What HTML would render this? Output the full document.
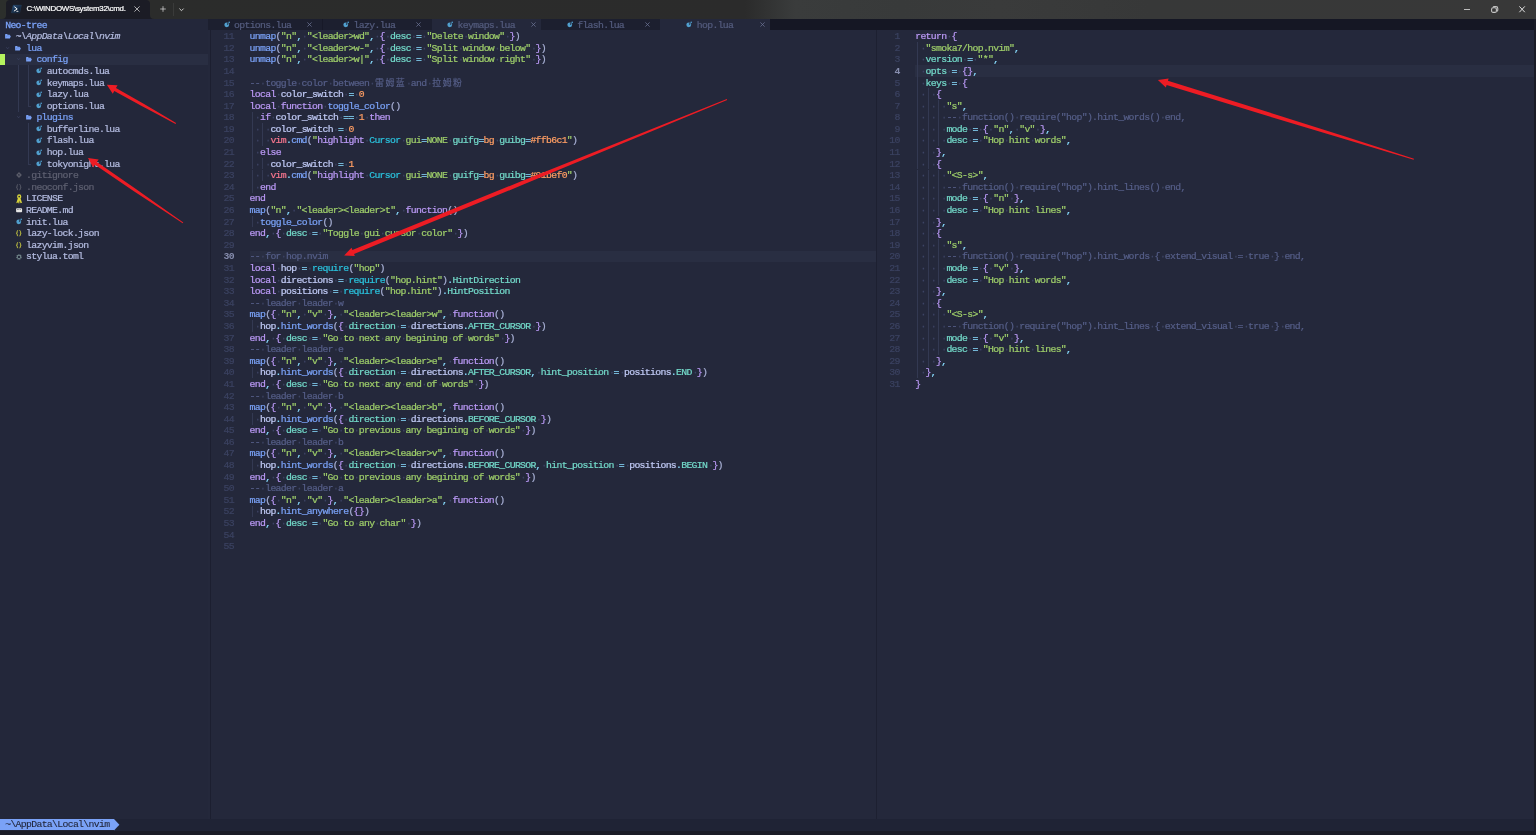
<!DOCTYPE html>
<html><head><meta charset="utf-8"><title>nvim</title><style>
html,body{margin:0;padding:0;background:#1a1b26;overflow:hidden}
body{width:1536px;height:835px;position:relative;font-family:"Liberation Mono",monospace}
#tb{position:absolute;left:0;top:0;width:1536px;height:19.0px;background:linear-gradient(90deg,#2c2f2c 0,#2b2c2b 150px,#2b2b2b 745px,#313232 765px,#3a3c3c 795px,#383a3a 900px,#3a3b3b 1000px,#373838 1150px,#383838 1536px)}
#tab{position:absolute;left:6px;top:0;width:144px;height:19.0px;background:#1b1c25;border-radius:4px 4px 0 0}
.tc{position:absolute;top:15.0px;width:4px;height:4px;background:#1b1c25}
.tc:after{content:"";position:absolute;left:0;top:0;width:4px;height:4px;background:#2c2f2c}
.tc.l{left:2px}.tc.l:after{border-radius:0 0 4px 0}
.tc.r{left:150px}.tc.r:after{border-radius:0 0 0 4px;background:#2b2c2b}
#tt{position:absolute;left:26.6px;top:4.4px;font:7.9px "Liberation Sans",sans-serif;letter-spacing:-0.26px;color:#fff;white-space:pre;line-height:9px;-webkit-text-stroke:0.2px}
#term{position:absolute;left:0;top:18.8px;width:1534px;height:811.44px;background:#24283b}
.bx{position:absolute}
.ic{position:absolute;overflow:visible}
.t{position:absolute;margin-top:0.77px;-webkit-text-stroke:0.22px;white-space:pre;font-size:9.8px;line-height:11.592px;height:11.592px;letter-spacing:-0.6697px;color:#c0caf5}
.g{position:absolute;width:1px;height:11.592px;background:#333952}
.sg{position:absolute;width:1px;background:#333952}
.sgh{position:absolute;height:1px;background:#333952}
.dot{color:#3d4464}
.cjk{font-family:"Liberation Mono","Noto Sans CJK SC",sans-serif;font-size:8.9px;letter-spacing:1.5px;padding-left:0.7px;margin-top:1.87px;-webkit-text-stroke:0.1px}
.fg{color:#c0caf5}.fgd{color:#a9b1d6}.com{color:#565f89;-webkit-text-stroke:0.2px}.blue{color:#7aa2f7}.b1{color:#2ac3de}.b5{color:#89ddff}
.mag{color:#bb9af7}.org{color:#ff9e64}.grn{color:#9ece6a}.g1{color:#73daca}.red{color:#f7768e}
.ln{color:#3b4261}.cur{color:#868dae;font-weight:bold;-webkit-text-stroke:0}
.b{-webkit-text-stroke:0.32px}
.fn{color:#b4bce0}.dim{color:#5e6071}
.root{font-style:italic;color:#b4bce0}
.tabn{color:#545c7e}
.sl{color:#1f2335;-webkit-text-stroke:0.1px}
#arr{position:absolute;left:0;top:0}
#all{position:absolute;left:0;top:0;width:1536px;height:835px;will-change:transform}
</style></head><body><div id="all">
<div id="tb"></div>
<div id="tab"></div><i class="tc l"></i><i class="tc r"></i>
<svg class="ic" style="left:10.5px;top:5px" width="11" height="8" viewBox="0 0 11 8"><defs><linearGradient id="pg" x1="0" y1="0" x2="1" y2="1"><stop offset="0" stop-color="#2f5a8a"/><stop offset="0.6" stop-color="#12263f"/><stop offset="1" stop-color="#0a1526"/></linearGradient></defs><path d="M2.2 0.2 H10.4 L8.6 7.8 H0.4 Z" fill="url(#pg)" stroke="#31577f" stroke-width="0.3"/><path d="M3.4 1.8 L6.2 3.9 L2.9 6.2" fill="none" stroke="#fff" stroke-width="1"/><path d="M5.4 6.3 H7.4" stroke="#fff" stroke-width="0.9"/></svg>
<span id="tt">C:\WINDOWS\system32\cmd.</span>
<svg class="ic" style="left:134px;top:6.3px" width="6" height="6" viewBox="0 0 6 6"><path d="M0.4 0.4 L5.6 5.6 M5.6 0.4 L0.4 5.6" stroke="#e8e8e8" stroke-width="0.7" fill="none"/></svg>
<svg class="ic" style="left:159.8px;top:6px" width="6" height="6" viewBox="0 0 6 6"><path d="M3 0.2 V5.8 M0.2 3 H5.8" stroke="#e0e0e0" stroke-width="0.7" fill="none"/></svg>
<i style="position:absolute;left:172.6px;top:2.5px;width:1px;height:13px;background:#3a3b3a"></i>
<svg class="ic" style="left:178.8px;top:8px" width="5" height="4" viewBox="0 0 5 4"><path d="M0.4 0.6 L2.5 2.7 L4.6 0.6" stroke="#dcdcdc" stroke-width="0.9" fill="none"/></svg>
<i style="position:absolute;left:1464px;top:8.7px;width:6.2px;height:1.1px;background:#bdbdbd"></i>
<svg class="ic" style="left:1490.9px;top:5.9px" width="7.4" height="7" viewBox="0 0 7.4 7"><rect x="0.6" y="1.7" width="4.8" height="4.7" rx="1.5" fill="none" stroke="#c4c4c4" stroke-width="1.1"/><path d="M2 1.5 Q2.2 0.6 3.4 0.6 H5 Q6.8 0.6 6.8 2.4 V3.9 Q6.8 5 5.8 5.3" fill="none" stroke="#c4c4c4" stroke-width="1.1"/></svg>
<svg class="ic" style="left:1518.9px;top:6.1px" width="6.2" height="6.6" viewBox="0 0 6.2 6.6"><path d="M0.4 0.4 L5.8 6.2 M5.8 0.4 L0.4 6.2" stroke="#ececec" stroke-width="0.95" fill="none"/></svg>
<div id="term"></div>
<div class="bx" style="left:0;top:18.8px;width:208px;height:799.85px;background:#23273a"></div>
<div class="bx" style="left:209.8px;top:30.39px;width:1.6px;height:788.26px;background:#1c1f30"></div>
<div class="bx" style="left:876px;top:30.39px;width:1px;height:788.26px;background:#1d2031"></div>
<div class="bx" style="left:208px;top:18.8px;width:1326px;height:11.592px;background:#151724"></div>
<div class="bx" style="left:208.0px;top:18.8px;width:114.4px;height:11.592px;background:#1c1f2f"></div>
<svg class="ic" style="left:223.5px;top:21.1px" width="7" height="7" viewBox="0 0 7 7"><circle cx="2.75" cy="3.85" r="2.4" fill="#51a0cf"/><circle cx="3.65" cy="2.95" r="0.75" fill="#1c1f2f"/><circle cx="5.2" cy="1.35" r="0.8" fill="#51a0cf"/></svg>
<span class="t tabn" style="left:234.0px;top:18.8px">options.lua</span>
<svg class="ic" style="left:307.2px;top:22.2px" width="5" height="5" viewBox="0 0 5 5"><path d="M0.4 0.4 L4.6 4.6 M4.6 0.4 L0.4 4.6" fill="none" stroke="#6b7394" stroke-width="0.75"/></svg>
<div class="bx" style="left:322.4px;top:18.8px;width:109.2px;height:11.592px;background:#1c1f2f"></div>
<svg class="ic" style="left:343.1px;top:21.1px" width="7" height="7" viewBox="0 0 7 7"><circle cx="2.75" cy="3.85" r="2.4" fill="#51a0cf"/><circle cx="3.65" cy="2.95" r="0.75" fill="#1c1f2f"/><circle cx="5.2" cy="1.35" r="0.8" fill="#51a0cf"/></svg>
<span class="t tabn" style="left:353.6px;top:18.8px">lazy.lua</span>
<svg class="ic" style="left:416.4px;top:22.2px" width="5" height="5" viewBox="0 0 5 5"><path d="M0.4 0.4 L4.6 4.6 M4.6 0.4 L0.4 4.6" fill="none" stroke="#6b7394" stroke-width="0.75"/></svg>
<div class="bx" style="left:431.6px;top:18.8px;width:109.2px;height:11.592px;background:#24283b"></div>
<svg class="ic" style="left:447.1px;top:21.1px" width="7" height="7" viewBox="0 0 7 7"><circle cx="2.75" cy="3.85" r="2.4" fill="#51a0cf"/><circle cx="3.65" cy="2.95" r="0.75" fill="#24283b"/><circle cx="5.2" cy="1.35" r="0.8" fill="#51a0cf"/></svg>
<span class="t tabn" style="left:457.6px;top:18.8px">keymaps.lua</span>
<svg class="ic" style="left:530.8px;top:22.2px" width="5" height="5" viewBox="0 0 5 5"><path d="M0.4 0.4 L4.6 4.6 M4.6 0.4 L0.4 4.6" fill="none" stroke="#6b7394" stroke-width="0.75"/></svg>
<div class="bx" style="left:540.8px;top:18.8px;width:119.6px;height:11.592px;background:#1c1f2f"></div>
<svg class="ic" style="left:566.7px;top:21.1px" width="7" height="7" viewBox="0 0 7 7"><circle cx="2.75" cy="3.85" r="2.4" fill="#51a0cf"/><circle cx="3.65" cy="2.95" r="0.75" fill="#1c1f2f"/><circle cx="5.2" cy="1.35" r="0.8" fill="#51a0cf"/></svg>
<span class="t tabn" style="left:577.2px;top:18.8px">flash.lua</span>
<svg class="ic" style="left:645.2px;top:22.2px" width="5" height="5" viewBox="0 0 5 5"><path d="M0.4 0.4 L4.6 4.6 M4.6 0.4 L0.4 4.6" fill="none" stroke="#6b7394" stroke-width="0.75"/></svg>
<div class="bx" style="left:660.4px;top:18.8px;width:109.2px;height:11.592px;background:#24283b"></div>
<svg class="ic" style="left:686.3px;top:21.1px" width="7" height="7" viewBox="0 0 7 7"><circle cx="2.75" cy="3.85" r="2.4" fill="#51a0cf"/><circle cx="3.65" cy="2.95" r="0.75" fill="#24283b"/><circle cx="5.2" cy="1.35" r="0.8" fill="#51a0cf"/></svg>
<span class="t tabn" style="left:696.8px;top:18.8px">hop.lua</span>
<svg class="ic" style="left:759.6px;top:22.2px" width="5" height="5" viewBox="0 0 5 5"><path d="M0.4 0.4 L4.6 4.6 M4.6 0.4 L0.4 4.6" fill="none" stroke="#6b7394" stroke-width="0.75"/></svg>
<div class="bx" style="left:321.9px;top:18.8px;width:1px;height:11.592px;background:#171928"></div>
<div class="bx" style="left:0;top:818.65px;width:1534px;height:11.892000000000001px;background:#1f2335"></div>
<div class="bx" style="left:0;top:818.65px;width:114.4px;height:11.592px;background:#7aa2f7"></div>
<svg class="ic" style="left:114.2px;top:818.65px" width="6" height="11.592" viewBox="0 0 6 11.592"><path d="M0 0 L5.4 5.796 L0 11.592 Z" fill="#7aa2f7"/></svg>
<span class="t sl" style="left:5.2px;top:818.65px">~\AppData\Local\nvim</span>
<div class="bx" style="left:0;top:53.58px;width:208px;height:11.592px;background:#292e42"></div>
<div class="bx" style="left:0;top:53.58px;width:5.2px;height:11.592px;background:#b5f45e"></div>
<span class="t blue b" style="left:5.2px;top:18.8px">Neo-tree</span>
<svg class="ic" style="left:4.8px;top:34.09px" width="6" height="4.8" viewBox="0 0 6 4.8"><path d="M0.1 0.5 Q0.1 0.1 0.5 0.1 H2.1 L2.7 0.7 H4.6 Q5 0.7 5 1.1 V1.7 H5.6 Q6 1.7 5.85 2.1 L5 4.2 Q4.8 4.6 4.4 4.6 H0.5 Q0.1 4.6 0.1 4.2 Z" fill="#7aa2f7"/><path d="M0.7 3.6 L1.6 1.9 H4.9" fill="none" stroke="#4f6cb0" stroke-width="0.35"/></svg>
<span class="t root" style="left:15.6px;top:30.39px">~\AppData\Local\nvim</span>
<svg class="ic" style="left:6.2px;top:46.78px" width="3.2" height="2.2" viewBox="0 0 3.2 2.2"><path d="M0.3 0.3 L1.6 1.8 L2.9 0.3" fill="none" stroke="#3b4261" stroke-width="0.8"/></svg>
<svg class="ic" style="left:15.2px;top:45.68px" width="6" height="4.8" viewBox="0 0 6 4.8"><path d="M0.1 0.5 Q0.1 0.1 0.5 0.1 H2.1 L2.7 0.7 H4.6 Q5 0.7 5 1.1 V1.7 H5.6 Q6 1.7 5.85 2.1 L5 4.2 Q4.8 4.6 4.4 4.6 H0.5 Q0.1 4.6 0.1 4.2 Z" fill="#7aa2f7"/><path d="M0.7 3.6 L1.6 1.9 H4.9" fill="none" stroke="#4f6cb0" stroke-width="0.35"/></svg>
<span class="t blue" style="left:26.0px;top:41.98px">lua</span>
<svg class="ic" style="left:16.6px;top:58.38px" width="3.2" height="2.2" viewBox="0 0 3.2 2.2"><path d="M0.3 0.3 L1.6 1.8 L2.9 0.3" fill="none" stroke="#3b4261" stroke-width="0.8"/></svg>
<svg class="ic" style="left:25.6px;top:57.28px" width="6" height="4.8" viewBox="0 0 6 4.8"><path d="M0.1 0.5 Q0.1 0.1 0.5 0.1 H2.1 L2.7 0.7 H4.6 Q5 0.7 5 1.1 V1.7 H5.6 Q6 1.7 5.85 2.1 L5 4.2 Q4.8 4.6 4.4 4.6 H0.5 Q0.1 4.6 0.1 4.2 Z" fill="#7aa2f7"/><path d="M0.7 3.6 L1.6 1.9 H4.9" fill="none" stroke="#4f6cb0" stroke-width="0.35"/></svg>
<span class="t blue" style="left:36.4px;top:53.58px">config</span>
<svg class="ic" style="left:36.3px;top:67.47px" width="7" height="7" viewBox="0 0 7 7"><circle cx="2.75" cy="3.85" r="2.4" fill="#51a0cf"/><circle cx="3.65" cy="2.95" r="0.75" fill="#1f2335"/><circle cx="5.2" cy="1.35" r="0.8" fill="#51a0cf"/></svg>
<span class="t fn" style="left:46.8px;top:65.17px">autocmds.lua</span>
<svg class="ic" style="left:36.3px;top:79.06px" width="7" height="7" viewBox="0 0 7 7"><circle cx="2.75" cy="3.85" r="2.4" fill="#51a0cf"/><circle cx="3.65" cy="2.95" r="0.75" fill="#1f2335"/><circle cx="5.2" cy="1.35" r="0.8" fill="#51a0cf"/></svg>
<span class="t fn" style="left:46.8px;top:76.76px">keymaps.lua</span>
<svg class="ic" style="left:36.3px;top:90.65px" width="7" height="7" viewBox="0 0 7 7"><circle cx="2.75" cy="3.85" r="2.4" fill="#51a0cf"/><circle cx="3.65" cy="2.95" r="0.75" fill="#1f2335"/><circle cx="5.2" cy="1.35" r="0.8" fill="#51a0cf"/></svg>
<span class="t fn" style="left:46.8px;top:88.35px">lazy.lua</span>
<svg class="ic" style="left:36.3px;top:102.24px" width="7" height="7" viewBox="0 0 7 7"><circle cx="2.75" cy="3.85" r="2.4" fill="#51a0cf"/><circle cx="3.65" cy="2.95" r="0.75" fill="#1f2335"/><circle cx="5.2" cy="1.35" r="0.8" fill="#51a0cf"/></svg>
<span class="t fn" style="left:46.8px;top:99.94px">options.lua</span>
<svg class="ic" style="left:16.6px;top:116.34px" width="3.2" height="2.2" viewBox="0 0 3.2 2.2"><path d="M0.3 0.3 L1.6 1.8 L2.9 0.3" fill="none" stroke="#3b4261" stroke-width="0.8"/></svg>
<svg class="ic" style="left:25.6px;top:115.24px" width="6" height="4.8" viewBox="0 0 6 4.8"><path d="M0.1 0.5 Q0.1 0.1 0.5 0.1 H2.1 L2.7 0.7 H4.6 Q5 0.7 5 1.1 V1.7 H5.6 Q6 1.7 5.85 2.1 L5 4.2 Q4.8 4.6 4.4 4.6 H0.5 Q0.1 4.6 0.1 4.2 Z" fill="#7aa2f7"/><path d="M0.7 3.6 L1.6 1.9 H4.9" fill="none" stroke="#4f6cb0" stroke-width="0.35"/></svg>
<span class="t blue" style="left:36.4px;top:111.54px">plugins</span>
<svg class="ic" style="left:36.3px;top:125.43px" width="7" height="7" viewBox="0 0 7 7"><circle cx="2.75" cy="3.85" r="2.4" fill="#51a0cf"/><circle cx="3.65" cy="2.95" r="0.75" fill="#1f2335"/><circle cx="5.2" cy="1.35" r="0.8" fill="#51a0cf"/></svg>
<span class="t fn" style="left:46.8px;top:123.13px">bufferline.lua</span>
<svg class="ic" style="left:36.3px;top:137.02px" width="7" height="7" viewBox="0 0 7 7"><circle cx="2.75" cy="3.85" r="2.4" fill="#51a0cf"/><circle cx="3.65" cy="2.95" r="0.75" fill="#1f2335"/><circle cx="5.2" cy="1.35" r="0.8" fill="#51a0cf"/></svg>
<span class="t fn" style="left:46.8px;top:134.72px">flash.lua</span>
<svg class="ic" style="left:36.3px;top:148.61px" width="7" height="7" viewBox="0 0 7 7"><circle cx="2.75" cy="3.85" r="2.4" fill="#51a0cf"/><circle cx="3.65" cy="2.95" r="0.75" fill="#1f2335"/><circle cx="5.2" cy="1.35" r="0.8" fill="#51a0cf"/></svg>
<span class="t fn" style="left:46.8px;top:146.31px">hop.lua</span>
<svg class="ic" style="left:36.3px;top:160.2px" width="7" height="7" viewBox="0 0 7 7"><circle cx="2.75" cy="3.85" r="2.4" fill="#51a0cf"/><circle cx="3.65" cy="2.95" r="0.75" fill="#1f2335"/><circle cx="5.2" cy="1.35" r="0.8" fill="#51a0cf"/></svg>
<span class="t fn" style="left:46.8px;top:157.9px">tokyonight.lua</span>
<i class="sg" style="left:17.7px;top:65.17px;height:46.37px"></i>
<i class="sg" style="left:28.1px;top:65.17px;height:40.57px"></i>
<i class="sgh" style="left:28.1px;top:105.74px;width:3.4px"></i>
<i class="sg" style="left:28.1px;top:123.13px;height:40.57px"></i>
<i class="sgh" style="left:28.1px;top:163.7px;width:3.4px"></i>
<svg class="ic" style="left:15.8px;top:172.3px" width="6" height="6" viewBox="0 0 6 6"><path d="M3 0.1 L5.9 3 L3 5.9 L0.1 3 Z" fill="#5a5c69"/><circle cx="3" cy="3" r="0.7" fill="#23273a"/><path d="M1.6 1.6 L3 3" stroke="#23273a" stroke-width="0.4"/></svg>
<span class="t dim" style="left:26.0px;top:169.5px">.gitignore</span>
<svg class="ic" style="left:15.8px;top:183.79px" width="5.6" height="6.4" viewBox="0 0 5.6 6.4"><path d="M2.1 0.5 Q1.2 0.5 1.2 1.4 V2.3 Q1.2 3.1 0.4 3.2 Q1.2 3.3 1.2 4.1 V5 Q1.2 5.9 2.1 5.9 M3.5 0.5 Q4.4 0.5 4.4 1.4 V2.3 Q4.4 3.1 5.2 3.2 Q4.4 3.3 4.4 4.1 V5 Q4.4 5.9 3.5 5.9" fill="none" stroke="#5a5c69" stroke-width="1"/></svg>
<span class="t dim" style="left:26.0px;top:181.09px">.neoconf.json</span>
<svg class="ic" style="left:15.6px;top:193.58px" width="6.4" height="10" viewBox="0 0 6.4 10"><path d="M3.2 0.3 Q5.3 0.3 5.3 2.6 Q5.3 4 4.6 4.6 L6.2 9.3 L4.6 8.4 L3.9 9.8 L3.2 6.4 L2.5 9.8 L1.8 8.4 L0.2 9.3 L1.8 4.6 Q1.1 4 1.1 2.6 Q1.1 0.3 3.2 0.3 Z" fill="#d6d23a"/><circle cx="3.2" cy="2.6" r="0.85" fill="#23273a"/></svg>
<span class="t fn" style="left:26.0px;top:192.68px">LICENSE</span>
<svg class="ic" style="left:15.8px;top:208.07px" width="6.2" height="4.4" viewBox="0 0 6.2 4.4"><rect x="0.1" y="0.2" width="6" height="4" rx="0.8" fill="#e6e6e6"/><path d="M1 1.5 H2.8 M3.6 1.5 H5" stroke="#555" stroke-width="0.55"/></svg>
<span class="t fn" style="left:26.0px;top:204.27px">README.md</span>
<svg class="ic" style="left:15.5px;top:218.16px" width="7" height="7" viewBox="0 0 7 7"><circle cx="2.75" cy="3.85" r="2.4" fill="#51a0cf"/><circle cx="3.65" cy="2.95" r="0.75" fill="#1f2335"/><circle cx="5.2" cy="1.35" r="0.8" fill="#51a0cf"/></svg>
<span class="t fn" style="left:26.0px;top:215.86px">init.lua</span>
<svg class="ic" style="left:15.8px;top:230.16px" width="5.6" height="6.4" viewBox="0 0 5.6 6.4"><path d="M2.1 0.5 Q1.2 0.5 1.2 1.4 V2.3 Q1.2 3.1 0.4 3.2 Q1.2 3.3 1.2 4.1 V5 Q1.2 5.9 2.1 5.9 M3.5 0.5 Q4.4 0.5 4.4 1.4 V2.3 Q4.4 3.1 5.2 3.2 Q4.4 3.3 4.4 4.1 V5 Q4.4 5.9 3.5 5.9" fill="none" stroke="#cbcb41" stroke-width="1"/></svg>
<span class="t fn" style="left:26.0px;top:227.46px">lazy-lock.json</span>
<svg class="ic" style="left:15.8px;top:241.75px" width="5.6" height="6.4" viewBox="0 0 5.6 6.4"><path d="M2.1 0.5 Q1.2 0.5 1.2 1.4 V2.3 Q1.2 3.1 0.4 3.2 Q1.2 3.3 1.2 4.1 V5 Q1.2 5.9 2.1 5.9 M3.5 0.5 Q4.4 0.5 4.4 1.4 V2.3 Q4.4 3.1 5.2 3.2 Q4.4 3.3 4.4 4.1 V5 Q4.4 5.9 3.5 5.9" fill="none" stroke="#cbcb41" stroke-width="1"/></svg>
<span class="t fn" style="left:26.0px;top:239.05px">lazyvim.json</span>
<svg class="ic" style="left:15.7px;top:253.64px" width="6" height="6" viewBox="0 0 6 6"><circle cx="3" cy="3" r="2" fill="none" stroke="#6d8086" stroke-width="1.5" stroke-dasharray="1.1 0.47"/><circle cx="3" cy="3" r="1.7" fill="none" stroke="#6d8086" stroke-width="0.9"/></svg>
<span class="t fn" style="left:26.0px;top:250.64px">stylua.toml</span>
<div class="bx" style="left:249.6px;top:250.64px;width:626.4px;height:11.592px;background:#292e42"></div>
<span class="t ln" style="left:223.6px;top:30.39px">11</span>
<span class="t dot" style="left:249.6px;top:30.39px">          ·             · ·    · ·       ·       ·</span>
<span class="t blue" style="left:249.6px;top:30.39px">unmap</span>
<span class="t fgd" style="left:275.6px;top:30.39px">(</span>
<span class="t grn" style="left:280.8px;top:30.39px">"n"</span>
<span class="t b5" style="left:296.4px;top:30.39px">,</span>
<span class="t grn" style="left:306.8px;top:30.39px">"&lt;leader&gt;wd"</span>
<span class="t b5" style="left:369.2px;top:30.39px">,</span>
<span class="t mag" style="left:379.6px;top:30.39px">{</span>
<span class="t g1" style="left:390.0px;top:30.39px">desc</span>
<span class="t b5" style="left:416.0px;top:30.39px">=</span>
<span class="t grn" style="left:426.4px;top:30.39px">"Delete</span>
<span class="t grn" style="left:468.0px;top:30.39px">window"</span>
<span class="t mag" style="left:509.6px;top:30.39px">}</span>
<span class="t fgd" style="left:514.8px;top:30.39px">)</span>
<span class="t ln" style="left:223.6px;top:41.98px">12</span>
<span class="t dot" style="left:249.6px;top:41.98px">          ·             · ·    · ·      ·      ·      ·</span>
<span class="t blue" style="left:249.6px;top:41.98px">unmap</span>
<span class="t fgd" style="left:275.6px;top:41.98px">(</span>
<span class="t grn" style="left:280.8px;top:41.98px">"n"</span>
<span class="t b5" style="left:296.4px;top:41.98px">,</span>
<span class="t grn" style="left:306.8px;top:41.98px">"&lt;leader&gt;w-"</span>
<span class="t b5" style="left:369.2px;top:41.98px">,</span>
<span class="t mag" style="left:379.6px;top:41.98px">{</span>
<span class="t g1" style="left:390.0px;top:41.98px">desc</span>
<span class="t b5" style="left:416.0px;top:41.98px">=</span>
<span class="t grn" style="left:426.4px;top:41.98px">"Split</span>
<span class="t grn" style="left:462.8px;top:41.98px">window</span>
<span class="t grn" style="left:499.2px;top:41.98px">below"</span>
<span class="t mag" style="left:535.6px;top:41.98px">}</span>
<span class="t fgd" style="left:540.8px;top:41.98px">)</span>
<span class="t ln" style="left:223.6px;top:53.58px">13</span>
<span class="t dot" style="left:249.6px;top:53.58px">          ·             · ·    · ·      ·      ·      ·</span>
<span class="t blue" style="left:249.6px;top:53.58px">unmap</span>
<span class="t fgd" style="left:275.6px;top:53.58px">(</span>
<span class="t grn" style="left:280.8px;top:53.58px">"n"</span>
<span class="t b5" style="left:296.4px;top:53.58px">,</span>
<span class="t grn" style="left:306.8px;top:53.58px">"&lt;leader&gt;w|"</span>
<span class="t b5" style="left:369.2px;top:53.58px">,</span>
<span class="t mag" style="left:379.6px;top:53.58px">{</span>
<span class="t g1" style="left:390.0px;top:53.58px">desc</span>
<span class="t b5" style="left:416.0px;top:53.58px">=</span>
<span class="t grn" style="left:426.4px;top:53.58px">"Split</span>
<span class="t grn" style="left:462.8px;top:53.58px">window</span>
<span class="t grn" style="left:499.2px;top:53.58px">right"</span>
<span class="t mag" style="left:535.6px;top:53.58px">}</span>
<span class="t fgd" style="left:540.8px;top:53.58px">)</span>
<span class="t ln" style="left:223.6px;top:65.17px">14</span>
<span class="t ln" style="left:223.6px;top:76.76px">15</span>
<span class="t dot" style="left:249.6px;top:76.76px">  ·      ·     ·       ·      ·   ·</span>
<span class="t com" style="left:249.6px;top:76.76px">--</span>
<span class="t com" style="left:265.2px;top:76.76px">toggle</span>
<span class="t com" style="left:301.6px;top:76.76px">color</span>
<span class="t com" style="left:332.8px;top:76.76px">between</span>
<span class="t com cjk" style="left:374.4px;top:76.76px">雷姆蓝</span>
<span class="t com" style="left:410.8px;top:76.76px">and</span>
<span class="t com cjk" style="left:431.6px;top:76.76px">拉姆粉</span>
<span class="t ln" style="left:223.6px;top:88.35px">16</span>
<span class="t dot" style="left:249.6px;top:88.35px">     ·            · ·</span>
<span class="t mag" style="left:249.6px;top:88.35px">local</span>
<span class="t fg" style="left:280.8px;top:88.35px">color_switch</span>
<span class="t b5" style="left:348.4px;top:88.35px">=</span>
<span class="t org" style="left:358.8px;top:88.35px">0</span>
<span class="t ln" style="left:223.6px;top:99.94px">17</span>
<span class="t dot" style="left:249.6px;top:99.94px">     ·        ·</span>
<span class="t mag" style="left:249.6px;top:99.94px">local</span>
<span class="t mag" style="left:280.8px;top:99.94px">function</span>
<span class="t blue" style="left:327.6px;top:99.94px">toggle_color</span>
<span class="t fgd" style="left:390.0px;top:99.94px">(</span>
<span class="t fgd" style="left:395.2px;top:99.94px">)</span>
<span class="t ln" style="left:223.6px;top:111.54px">18</span>
<i class="g" style="left:251.7px;top:111.54px"></i>
<span class="t dot" style="left:249.6px;top:111.54px"> ·  ·            ·  · ·</span>
<span class="t mag" style="left:260.0px;top:111.54px">if</span>
<span class="t fg" style="left:275.6px;top:111.54px">color_switch</span>
<span class="t b5" style="left:343.2px;top:111.54px">==</span>
<span class="t org" style="left:358.8px;top:111.54px">1</span>
<span class="t mag" style="left:369.2px;top:111.54px">then</span>
<span class="t ln" style="left:223.6px;top:123.13px">19</span>
<i class="g" style="left:251.7px;top:123.13px"></i>
<i class="g" style="left:262.1px;top:123.13px"></i>
<span class="t dot" style="left:249.6px;top:123.13px"> · ·            · ·</span>
<span class="t fg" style="left:270.4px;top:123.13px">color_switch</span>
<span class="t b5" style="left:338.0px;top:123.13px">=</span>
<span class="t org" style="left:348.4px;top:123.13px">0</span>
<span class="t ln" style="left:223.6px;top:134.72px">20</span>
<i class="g" style="left:251.7px;top:134.72px"></i>
<i class="g" style="left:262.1px;top:134.72px"></i>
<span class="t dot" style="left:249.6px;top:134.72px"> · ·                  ·      ·        ·        ·</span>
<span class="t red" style="left:270.4px;top:134.72px">vim</span>
<span class="t b5" style="left:286.0px;top:134.72px">.</span>
<span class="t blue" style="left:291.2px;top:134.72px">cmd</span>
<span class="t fgd" style="left:306.8px;top:134.72px">(</span>
<span class="t grn" style="left:312.0px;top:134.72px">"</span>
<span class="t mag" style="left:317.2px;top:134.72px">highlight</span>
<span class="t b1" style="left:369.2px;top:134.72px">Cursor</span>
<span class="t grn" style="left:405.6px;top:134.72px">gui</span>
<span class="t b5" style="left:421.2px;top:134.72px">=</span>
<span class="t grn" style="left:426.4px;top:134.72px">NONE</span>
<span class="t g1" style="left:452.4px;top:134.72px">guifg</span>
<span class="t b5" style="left:478.4px;top:134.72px">=</span>
<span class="t org" style="left:483.6px;top:134.72px">bg</span>
<span class="t g1" style="left:499.2px;top:134.72px">guibg</span>
<span class="t b5" style="left:525.2px;top:134.72px">=</span>
<span class="t org" style="left:530.4px;top:134.72px">#ffb6c1</span>
<span class="t grn" style="left:566.8px;top:134.72px">"</span>
<span class="t fgd" style="left:572.0px;top:134.72px">)</span>
<span class="t ln" style="left:223.6px;top:146.31px">21</span>
<i class="g" style="left:251.7px;top:146.31px"></i>
<span class="t dot" style="left:249.6px;top:146.31px"> ·</span>
<span class="t mag" style="left:260.0px;top:146.31px">else</span>
<span class="t ln" style="left:223.6px;top:157.9px">22</span>
<i class="g" style="left:251.7px;top:157.9px"></i>
<i class="g" style="left:262.1px;top:157.9px"></i>
<span class="t dot" style="left:249.6px;top:157.9px"> · ·            · ·</span>
<span class="t fg" style="left:270.4px;top:157.9px">color_switch</span>
<span class="t b5" style="left:338.0px;top:157.9px">=</span>
<span class="t org" style="left:348.4px;top:157.9px">1</span>
<span class="t ln" style="left:223.6px;top:169.5px">23</span>
<i class="g" style="left:251.7px;top:169.5px"></i>
<i class="g" style="left:262.1px;top:169.5px"></i>
<span class="t dot" style="left:249.6px;top:169.5px"> · ·                  ·      ·        ·        ·</span>
<span class="t red" style="left:270.4px;top:169.5px">vim</span>
<span class="t b5" style="left:286.0px;top:169.5px">.</span>
<span class="t blue" style="left:291.2px;top:169.5px">cmd</span>
<span class="t fgd" style="left:306.8px;top:169.5px">(</span>
<span class="t grn" style="left:312.0px;top:169.5px">"</span>
<span class="t mag" style="left:317.2px;top:169.5px">highlight</span>
<span class="t b1" style="left:369.2px;top:169.5px">Cursor</span>
<span class="t grn" style="left:405.6px;top:169.5px">gui</span>
<span class="t b5" style="left:421.2px;top:169.5px">=</span>
<span class="t grn" style="left:426.4px;top:169.5px">NONE</span>
<span class="t g1" style="left:452.4px;top:169.5px">guifg</span>
<span class="t b5" style="left:478.4px;top:169.5px">=</span>
<span class="t org" style="left:483.6px;top:169.5px">bg</span>
<span class="t g1" style="left:499.2px;top:169.5px">guibg</span>
<span class="t b5" style="left:525.2px;top:169.5px">=</span>
<span class="t org" style="left:530.4px;top:169.5px">#91bef0</span>
<span class="t grn" style="left:566.8px;top:169.5px">"</span>
<span class="t fgd" style="left:572.0px;top:169.5px">)</span>
<span class="t ln" style="left:223.6px;top:181.09px">24</span>
<i class="g" style="left:251.7px;top:181.09px"></i>
<span class="t dot" style="left:249.6px;top:181.09px"> ·</span>
<span class="t mag" style="left:260.0px;top:181.09px">end</span>
<span class="t ln" style="left:223.6px;top:192.68px">25</span>
<span class="t mag" style="left:249.6px;top:192.68px">end</span>
<span class="t ln" style="left:223.6px;top:204.27px">26</span>
<span class="t dot" style="left:249.6px;top:204.27px">        ·                    ·</span>
<span class="t blue" style="left:249.6px;top:204.27px">map</span>
<span class="t fgd" style="left:265.2px;top:204.27px">(</span>
<span class="t grn" style="left:270.4px;top:204.27px">"n"</span>
<span class="t b5" style="left:286.0px;top:204.27px">,</span>
<span class="t grn" style="left:296.4px;top:204.27px">"&lt;leader&gt;&lt;leader&gt;t"</span>
<span class="t b5" style="left:395.2px;top:204.27px">,</span>
<span class="t mag" style="left:405.6px;top:204.27px">function</span>
<span class="t fgd" style="left:447.2px;top:204.27px">(</span>
<span class="t fgd" style="left:452.4px;top:204.27px">)</span>
<span class="t ln" style="left:223.6px;top:215.86px">27</span>
<i class="g" style="left:251.7px;top:215.86px"></i>
<span class="t dot" style="left:249.6px;top:215.86px"> ·</span>
<span class="t blue" style="left:260.0px;top:215.86px">toggle_color</span>
<span class="t fgd" style="left:322.4px;top:215.86px">(</span>
<span class="t fgd" style="left:327.6px;top:215.86px">)</span>
<span class="t ln" style="left:223.6px;top:227.46px">28</span>
<span class="t dot" style="left:249.6px;top:227.46px">    · ·    · ·       ·   ·      ·      ·</span>
<span class="t mag" style="left:249.6px;top:227.46px">end</span>
<span class="t b5" style="left:265.2px;top:227.46px">,</span>
<span class="t mag" style="left:275.6px;top:227.46px">{</span>
<span class="t g1" style="left:286.0px;top:227.46px">desc</span>
<span class="t b5" style="left:312.0px;top:227.46px">=</span>
<span class="t grn" style="left:322.4px;top:227.46px">"Toggle</span>
<span class="t grn" style="left:364.0px;top:227.46px">gui</span>
<span class="t grn" style="left:384.8px;top:227.46px">cursor</span>
<span class="t grn" style="left:421.2px;top:227.46px">color"</span>
<span class="t mag" style="left:457.6px;top:227.46px">}</span>
<span class="t fgd" style="left:462.8px;top:227.46px">)</span>
<span class="t ln" style="left:223.6px;top:239.05px">29</span>
<span class="t ln cur" style="left:223.6px;top:250.64px">30</span>
<span class="t dot" style="left:249.6px;top:250.64px">  ·   ·</span>
<span class="t com" style="left:249.6px;top:250.64px">--</span>
<span class="t com" style="left:265.2px;top:250.64px">for</span>
<span class="t com" style="left:286.0px;top:250.64px">hop.nvim</span>
<span class="t ln" style="left:223.6px;top:262.23px">31</span>
<span class="t dot" style="left:249.6px;top:262.23px">     ·   · ·</span>
<span class="t mag" style="left:249.6px;top:262.23px">local</span>
<span class="t fg" style="left:280.8px;top:262.23px">hop</span>
<span class="t b5" style="left:301.6px;top:262.23px">=</span>
<span class="t b1" style="left:312.0px;top:262.23px">require</span>
<span class="t fgd" style="left:348.4px;top:262.23px">(</span>
<span class="t grn" style="left:353.6px;top:262.23px">"hop"</span>
<span class="t fgd" style="left:379.6px;top:262.23px">)</span>
<span class="t ln" style="left:223.6px;top:273.82px">32</span>
<span class="t dot" style="left:249.6px;top:273.82px">     ·          · ·</span>
<span class="t mag" style="left:249.6px;top:273.82px">local</span>
<span class="t fg" style="left:280.8px;top:273.82px">directions</span>
<span class="t b5" style="left:338.0px;top:273.82px">=</span>
<span class="t b1" style="left:348.4px;top:273.82px">require</span>
<span class="t fgd" style="left:384.8px;top:273.82px">(</span>
<span class="t grn" style="left:390.0px;top:273.82px">"hop.hint"</span>
<span class="t fgd" style="left:442.0px;top:273.82px">)</span>
<span class="t b5" style="left:447.2px;top:273.82px">.</span>
<span class="t g1" style="left:452.4px;top:273.82px">HintDirection</span>
<span class="t ln" style="left:223.6px;top:285.42px">33</span>
<span class="t dot" style="left:249.6px;top:285.42px">     ·         · ·</span>
<span class="t mag" style="left:249.6px;top:285.42px">local</span>
<span class="t fg" style="left:280.8px;top:285.42px">positions</span>
<span class="t b5" style="left:332.8px;top:285.42px">=</span>
<span class="t b1" style="left:343.2px;top:285.42px">require</span>
<span class="t fgd" style="left:379.6px;top:285.42px">(</span>
<span class="t grn" style="left:384.8px;top:285.42px">"hop.hint"</span>
<span class="t fgd" style="left:436.8px;top:285.42px">)</span>
<span class="t b5" style="left:442.0px;top:285.42px">.</span>
<span class="t g1" style="left:447.2px;top:285.42px">HintPosition</span>
<span class="t ln" style="left:223.6px;top:297.01px">34</span>
<span class="t dot" style="left:249.6px;top:297.01px">  ·      ·      ·</span>
<span class="t com" style="left:249.6px;top:297.01px">--</span>
<span class="t com" style="left:265.2px;top:297.01px">leader</span>
<span class="t com" style="left:301.6px;top:297.01px">leader</span>
<span class="t com" style="left:338.0px;top:297.01px">w</span>
<span class="t ln" style="left:223.6px;top:308.6px">35</span>
<span class="t dot" style="left:249.6px;top:308.6px">     ·    ·   ·  ·                    ·</span>
<span class="t blue" style="left:249.6px;top:308.6px">map</span>
<span class="t fgd" style="left:265.2px;top:308.6px">(</span>
<span class="t mag" style="left:270.4px;top:308.6px">{</span>
<span class="t grn" style="left:280.8px;top:308.6px">"n"</span>
<span class="t b5" style="left:296.4px;top:308.6px">,</span>
<span class="t grn" style="left:306.8px;top:308.6px">"v"</span>
<span class="t mag" style="left:327.6px;top:308.6px">}</span>
<span class="t b5" style="left:332.8px;top:308.6px">,</span>
<span class="t grn" style="left:343.2px;top:308.6px">"&lt;leader&gt;&lt;leader&gt;w"</span>
<span class="t b5" style="left:442.0px;top:308.6px">,</span>
<span class="t mag" style="left:452.4px;top:308.6px">function</span>
<span class="t fgd" style="left:494.0px;top:308.6px">(</span>
<span class="t fgd" style="left:499.2px;top:308.6px">)</span>
<span class="t ln" style="left:223.6px;top:320.19px">36</span>
<i class="g" style="left:251.7px;top:320.19px"></i>
<span class="t dot" style="left:249.6px;top:320.19px"> ·                ·         · ·                       ·</span>
<span class="t fg" style="left:260.0px;top:320.19px">hop</span>
<span class="t b5" style="left:275.6px;top:320.19px">.</span>
<span class="t blue" style="left:280.8px;top:320.19px">hint_words</span>
<span class="t fgd" style="left:332.8px;top:320.19px">(</span>
<span class="t mag" style="left:338.0px;top:320.19px">{</span>
<span class="t g1" style="left:348.4px;top:320.19px">direction</span>
<span class="t b5" style="left:400.4px;top:320.19px">=</span>
<span class="t fg" style="left:410.8px;top:320.19px">directions</span>
<span class="t b5" style="left:462.8px;top:320.19px">.</span>
<span class="t g1" style="left:468.0px;top:320.19px">AFTER_CURSOR</span>
<span class="t mag" style="left:535.6px;top:320.19px">}</span>
<span class="t fgd" style="left:540.8px;top:320.19px">)</span>
<span class="t ln" style="left:223.6px;top:331.78px">37</span>
<span class="t dot" style="left:249.6px;top:331.78px">    · ·    · ·   ·  ·    ·   ·        ·  ·      ·</span>
<span class="t mag" style="left:249.6px;top:331.78px">end</span>
<span class="t b5" style="left:265.2px;top:331.78px">,</span>
<span class="t mag" style="left:275.6px;top:331.78px">{</span>
<span class="t g1" style="left:286.0px;top:331.78px">desc</span>
<span class="t b5" style="left:312.0px;top:331.78px">=</span>
<span class="t grn" style="left:322.4px;top:331.78px">"Go</span>
<span class="t grn" style="left:343.2px;top:331.78px">to</span>
<span class="t grn" style="left:358.8px;top:331.78px">next</span>
<span class="t grn" style="left:384.8px;top:331.78px">any</span>
<span class="t grn" style="left:405.6px;top:331.78px">begining</span>
<span class="t grn" style="left:452.4px;top:331.78px">of</span>
<span class="t grn" style="left:468.0px;top:331.78px">words"</span>
<span class="t mag" style="left:504.4px;top:331.78px">}</span>
<span class="t fgd" style="left:509.6px;top:331.78px">)</span>
<span class="t ln" style="left:223.6px;top:343.38px">38</span>
<span class="t dot" style="left:249.6px;top:343.38px">  ·      ·      ·</span>
<span class="t com" style="left:249.6px;top:343.38px">--</span>
<span class="t com" style="left:265.2px;top:343.38px">leader</span>
<span class="t com" style="left:301.6px;top:343.38px">leader</span>
<span class="t com" style="left:338.0px;top:343.38px">e</span>
<span class="t ln" style="left:223.6px;top:354.97px">39</span>
<span class="t dot" style="left:249.6px;top:354.97px">     ·    ·   ·  ·                    ·</span>
<span class="t blue" style="left:249.6px;top:354.97px">map</span>
<span class="t fgd" style="left:265.2px;top:354.97px">(</span>
<span class="t mag" style="left:270.4px;top:354.97px">{</span>
<span class="t grn" style="left:280.8px;top:354.97px">"n"</span>
<span class="t b5" style="left:296.4px;top:354.97px">,</span>
<span class="t grn" style="left:306.8px;top:354.97px">"v"</span>
<span class="t mag" style="left:327.6px;top:354.97px">}</span>
<span class="t b5" style="left:332.8px;top:354.97px">,</span>
<span class="t grn" style="left:343.2px;top:354.97px">"&lt;leader&gt;&lt;leader&gt;e"</span>
<span class="t b5" style="left:442.0px;top:354.97px">,</span>
<span class="t mag" style="left:452.4px;top:354.97px">function</span>
<span class="t fgd" style="left:494.0px;top:354.97px">(</span>
<span class="t fgd" style="left:499.2px;top:354.97px">)</span>
<span class="t ln" style="left:223.6px;top:366.56px">40</span>
<i class="g" style="left:251.7px;top:366.56px"></i>
<span class="t dot" style="left:249.6px;top:366.56px"> ·                ·         · ·                        ·             · ·             ·</span>
<span class="t fg" style="left:260.0px;top:366.56px">hop</span>
<span class="t b5" style="left:275.6px;top:366.56px">.</span>
<span class="t blue" style="left:280.8px;top:366.56px">hint_words</span>
<span class="t fgd" style="left:332.8px;top:366.56px">(</span>
<span class="t mag" style="left:338.0px;top:366.56px">{</span>
<span class="t g1" style="left:348.4px;top:366.56px">direction</span>
<span class="t b5" style="left:400.4px;top:366.56px">=</span>
<span class="t fg" style="left:410.8px;top:366.56px">directions</span>
<span class="t b5" style="left:462.8px;top:366.56px">.</span>
<span class="t g1" style="left:468.0px;top:366.56px">AFTER_CURSOR</span>
<span class="t b5" style="left:530.4px;top:366.56px">,</span>
<span class="t g1" style="left:540.8px;top:366.56px">hint_position</span>
<span class="t b5" style="left:613.6px;top:366.56px">=</span>
<span class="t fg" style="left:624.0px;top:366.56px">positions</span>
<span class="t b5" style="left:670.8px;top:366.56px">.</span>
<span class="t g1" style="left:676.0px;top:366.56px">END</span>
<span class="t mag" style="left:696.8px;top:366.56px">}</span>
<span class="t fgd" style="left:702.0px;top:366.56px">)</span>
<span class="t ln" style="left:223.6px;top:378.15px">41</span>
<span class="t dot" style="left:249.6px;top:378.15px">    · ·    · ·   ·  ·    ·   ·   ·  ·      ·</span>
<span class="t mag" style="left:249.6px;top:378.15px">end</span>
<span class="t b5" style="left:265.2px;top:378.15px">,</span>
<span class="t mag" style="left:275.6px;top:378.15px">{</span>
<span class="t g1" style="left:286.0px;top:378.15px">desc</span>
<span class="t b5" style="left:312.0px;top:378.15px">=</span>
<span class="t grn" style="left:322.4px;top:378.15px">"Go</span>
<span class="t grn" style="left:343.2px;top:378.15px">to</span>
<span class="t grn" style="left:358.8px;top:378.15px">next</span>
<span class="t grn" style="left:384.8px;top:378.15px">any</span>
<span class="t grn" style="left:405.6px;top:378.15px">end</span>
<span class="t grn" style="left:426.4px;top:378.15px">of</span>
<span class="t grn" style="left:442.0px;top:378.15px">words"</span>
<span class="t mag" style="left:478.4px;top:378.15px">}</span>
<span class="t fgd" style="left:483.6px;top:378.15px">)</span>
<span class="t ln" style="left:223.6px;top:389.74px">42</span>
<span class="t dot" style="left:249.6px;top:389.74px">  ·      ·      ·</span>
<span class="t com" style="left:249.6px;top:389.74px">--</span>
<span class="t com" style="left:265.2px;top:389.74px">leader</span>
<span class="t com" style="left:301.6px;top:389.74px">leader</span>
<span class="t com" style="left:338.0px;top:389.74px">b</span>
<span class="t ln" style="left:223.6px;top:401.34px">43</span>
<span class="t dot" style="left:249.6px;top:401.34px">     ·    ·   ·  ·                    ·</span>
<span class="t blue" style="left:249.6px;top:401.34px">map</span>
<span class="t fgd" style="left:265.2px;top:401.34px">(</span>
<span class="t mag" style="left:270.4px;top:401.34px">{</span>
<span class="t grn" style="left:280.8px;top:401.34px">"n"</span>
<span class="t b5" style="left:296.4px;top:401.34px">,</span>
<span class="t grn" style="left:306.8px;top:401.34px">"v"</span>
<span class="t mag" style="left:327.6px;top:401.34px">}</span>
<span class="t b5" style="left:332.8px;top:401.34px">,</span>
<span class="t grn" style="left:343.2px;top:401.34px">"&lt;leader&gt;&lt;leader&gt;b"</span>
<span class="t b5" style="left:442.0px;top:401.34px">,</span>
<span class="t mag" style="left:452.4px;top:401.34px">function</span>
<span class="t fgd" style="left:494.0px;top:401.34px">(</span>
<span class="t fgd" style="left:499.2px;top:401.34px">)</span>
<span class="t ln" style="left:223.6px;top:412.93px">44</span>
<i class="g" style="left:251.7px;top:412.93px"></i>
<span class="t dot" style="left:249.6px;top:412.93px"> ·                ·         · ·                        ·</span>
<span class="t fg" style="left:260.0px;top:412.93px">hop</span>
<span class="t b5" style="left:275.6px;top:412.93px">.</span>
<span class="t blue" style="left:280.8px;top:412.93px">hint_words</span>
<span class="t fgd" style="left:332.8px;top:412.93px">(</span>
<span class="t mag" style="left:338.0px;top:412.93px">{</span>
<span class="t g1" style="left:348.4px;top:412.93px">direction</span>
<span class="t b5" style="left:400.4px;top:412.93px">=</span>
<span class="t fg" style="left:410.8px;top:412.93px">directions</span>
<span class="t b5" style="left:462.8px;top:412.93px">.</span>
<span class="t g1" style="left:468.0px;top:412.93px">BEFORE_CURSOR</span>
<span class="t mag" style="left:540.8px;top:412.93px">}</span>
<span class="t fgd" style="left:546.0px;top:412.93px">)</span>
<span class="t ln" style="left:223.6px;top:424.52px">45</span>
<span class="t dot" style="left:249.6px;top:424.52px">    · ·    · ·   ·  ·        ·   ·        ·  ·      ·</span>
<span class="t mag" style="left:249.6px;top:424.52px">end</span>
<span class="t b5" style="left:265.2px;top:424.52px">,</span>
<span class="t mag" style="left:275.6px;top:424.52px">{</span>
<span class="t g1" style="left:286.0px;top:424.52px">desc</span>
<span class="t b5" style="left:312.0px;top:424.52px">=</span>
<span class="t grn" style="left:322.4px;top:424.52px">"Go</span>
<span class="t grn" style="left:343.2px;top:424.52px">to</span>
<span class="t grn" style="left:358.8px;top:424.52px">previous</span>
<span class="t grn" style="left:405.6px;top:424.52px">any</span>
<span class="t grn" style="left:426.4px;top:424.52px">begining</span>
<span class="t grn" style="left:473.2px;top:424.52px">of</span>
<span class="t grn" style="left:488.8px;top:424.52px">words"</span>
<span class="t mag" style="left:525.2px;top:424.52px">}</span>
<span class="t fgd" style="left:530.4px;top:424.52px">)</span>
<span class="t ln" style="left:223.6px;top:436.11px">46</span>
<span class="t dot" style="left:249.6px;top:436.11px">  ·      ·      ·</span>
<span class="t com" style="left:249.6px;top:436.11px">--</span>
<span class="t com" style="left:265.2px;top:436.11px">leader</span>
<span class="t com" style="left:301.6px;top:436.11px">leader</span>
<span class="t com" style="left:338.0px;top:436.11px">b</span>
<span class="t ln" style="left:223.6px;top:447.7px">47</span>
<span class="t dot" style="left:249.6px;top:447.7px">     ·    ·   ·  ·                    ·</span>
<span class="t blue" style="left:249.6px;top:447.7px">map</span>
<span class="t fgd" style="left:265.2px;top:447.7px">(</span>
<span class="t mag" style="left:270.4px;top:447.7px">{</span>
<span class="t grn" style="left:280.8px;top:447.7px">"n"</span>
<span class="t b5" style="left:296.4px;top:447.7px">,</span>
<span class="t grn" style="left:306.8px;top:447.7px">"v"</span>
<span class="t mag" style="left:327.6px;top:447.7px">}</span>
<span class="t b5" style="left:332.8px;top:447.7px">,</span>
<span class="t grn" style="left:343.2px;top:447.7px">"&lt;leader&gt;&lt;leader&gt;v"</span>
<span class="t b5" style="left:442.0px;top:447.7px">,</span>
<span class="t mag" style="left:452.4px;top:447.7px">function</span>
<span class="t fgd" style="left:494.0px;top:447.7px">(</span>
<span class="t fgd" style="left:499.2px;top:447.7px">)</span>
<span class="t ln" style="left:223.6px;top:459.3px">48</span>
<i class="g" style="left:251.7px;top:459.3px"></i>
<span class="t dot" style="left:249.6px;top:459.3px"> ·                ·         · ·                         ·             · ·               ·</span>
<span class="t fg" style="left:260.0px;top:459.3px">hop</span>
<span class="t b5" style="left:275.6px;top:459.3px">.</span>
<span class="t blue" style="left:280.8px;top:459.3px">hint_words</span>
<span class="t fgd" style="left:332.8px;top:459.3px">(</span>
<span class="t mag" style="left:338.0px;top:459.3px">{</span>
<span class="t g1" style="left:348.4px;top:459.3px">direction</span>
<span class="t b5" style="left:400.4px;top:459.3px">=</span>
<span class="t fg" style="left:410.8px;top:459.3px">directions</span>
<span class="t b5" style="left:462.8px;top:459.3px">.</span>
<span class="t g1" style="left:468.0px;top:459.3px">BEFORE_CURSOR</span>
<span class="t b5" style="left:535.6px;top:459.3px">,</span>
<span class="t g1" style="left:546.0px;top:459.3px">hint_position</span>
<span class="t b5" style="left:618.8px;top:459.3px">=</span>
<span class="t fg" style="left:629.2px;top:459.3px">positions</span>
<span class="t b5" style="left:676.0px;top:459.3px">.</span>
<span class="t g1" style="left:681.2px;top:459.3px">BEGIN</span>
<span class="t mag" style="left:712.4px;top:459.3px">}</span>
<span class="t fgd" style="left:717.6px;top:459.3px">)</span>
<span class="t ln" style="left:223.6px;top:470.89px">49</span>
<span class="t dot" style="left:249.6px;top:470.89px">    · ·    · ·   ·  ·        ·   ·        ·  ·      ·</span>
<span class="t mag" style="left:249.6px;top:470.89px">end</span>
<span class="t b5" style="left:265.2px;top:470.89px">,</span>
<span class="t mag" style="left:275.6px;top:470.89px">{</span>
<span class="t g1" style="left:286.0px;top:470.89px">desc</span>
<span class="t b5" style="left:312.0px;top:470.89px">=</span>
<span class="t grn" style="left:322.4px;top:470.89px">"Go</span>
<span class="t grn" style="left:343.2px;top:470.89px">to</span>
<span class="t grn" style="left:358.8px;top:470.89px">previous</span>
<span class="t grn" style="left:405.6px;top:470.89px">any</span>
<span class="t grn" style="left:426.4px;top:470.89px">begining</span>
<span class="t grn" style="left:473.2px;top:470.89px">of</span>
<span class="t grn" style="left:488.8px;top:470.89px">words"</span>
<span class="t mag" style="left:525.2px;top:470.89px">}</span>
<span class="t fgd" style="left:530.4px;top:470.89px">)</span>
<span class="t ln" style="left:223.6px;top:482.48px">50</span>
<span class="t dot" style="left:249.6px;top:482.48px">  ·      ·      ·</span>
<span class="t com" style="left:249.6px;top:482.48px">--</span>
<span class="t com" style="left:265.2px;top:482.48px">leader</span>
<span class="t com" style="left:301.6px;top:482.48px">leader</span>
<span class="t com" style="left:338.0px;top:482.48px">a</span>
<span class="t ln" style="left:223.6px;top:494.07px">51</span>
<span class="t dot" style="left:249.6px;top:494.07px">     ·    ·   ·  ·                    ·</span>
<span class="t blue" style="left:249.6px;top:494.07px">map</span>
<span class="t fgd" style="left:265.2px;top:494.07px">(</span>
<span class="t mag" style="left:270.4px;top:494.07px">{</span>
<span class="t grn" style="left:280.8px;top:494.07px">"n"</span>
<span class="t b5" style="left:296.4px;top:494.07px">,</span>
<span class="t grn" style="left:306.8px;top:494.07px">"v"</span>
<span class="t mag" style="left:327.6px;top:494.07px">}</span>
<span class="t b5" style="left:332.8px;top:494.07px">,</span>
<span class="t grn" style="left:343.2px;top:494.07px">"&lt;leader&gt;&lt;leader&gt;a"</span>
<span class="t b5" style="left:442.0px;top:494.07px">,</span>
<span class="t mag" style="left:452.4px;top:494.07px">function</span>
<span class="t fgd" style="left:494.0px;top:494.07px">(</span>
<span class="t fgd" style="left:499.2px;top:494.07px">)</span>
<span class="t ln" style="left:223.6px;top:505.66px">52</span>
<i class="g" style="left:251.7px;top:505.66px"></i>
<span class="t dot" style="left:249.6px;top:505.66px"> ·</span>
<span class="t fg" style="left:260.0px;top:505.66px">hop</span>
<span class="t b5" style="left:275.6px;top:505.66px">.</span>
<span class="t blue" style="left:280.8px;top:505.66px">hint_anywhere</span>
<span class="t fgd" style="left:348.4px;top:505.66px">(</span>
<span class="t mag" style="left:353.6px;top:505.66px">{</span>
<span class="t mag" style="left:358.8px;top:505.66px">}</span>
<span class="t fgd" style="left:364.0px;top:505.66px">)</span>
<span class="t ln" style="left:223.6px;top:517.26px">53</span>
<span class="t dot" style="left:249.6px;top:517.26px">    · ·    · ·   ·  ·   ·     ·</span>
<span class="t mag" style="left:249.6px;top:517.26px">end</span>
<span class="t b5" style="left:265.2px;top:517.26px">,</span>
<span class="t mag" style="left:275.6px;top:517.26px">{</span>
<span class="t g1" style="left:286.0px;top:517.26px">desc</span>
<span class="t b5" style="left:312.0px;top:517.26px">=</span>
<span class="t grn" style="left:322.4px;top:517.26px">"Go</span>
<span class="t grn" style="left:343.2px;top:517.26px">to</span>
<span class="t grn" style="left:358.8px;top:517.26px">any</span>
<span class="t grn" style="left:379.6px;top:517.26px">char"</span>
<span class="t mag" style="left:410.8px;top:517.26px">}</span>
<span class="t fgd" style="left:416.0px;top:517.26px">)</span>
<span class="t ln" style="left:223.6px;top:528.85px">54</span>
<span class="t ln" style="left:223.6px;top:540.44px">55</span>
<div class="bx" style="left:915.2px;top:65.17px;width:618.8px;height:11.592px;background:#292e42"></div>
<span class="t ln" style="left:894.4px;top:30.39px">1</span>
<span class="t dot" style="left:915.2px;top:30.39px">      ·</span>
<span class="t mag" style="left:915.2px;top:30.39px">return</span>
<span class="t mag" style="left:951.6px;top:30.39px">{</span>
<span class="t ln" style="left:894.4px;top:41.98px">2</span>
<i class="g" style="left:917.3px;top:41.98px"></i>
<span class="t dot" style="left:915.2px;top:41.98px"> ·</span>
<span class="t grn" style="left:925.6px;top:41.98px">"smoka7/hop.nvim"</span>
<span class="t b5" style="left:1014.0px;top:41.98px">,</span>
<span class="t ln" style="left:894.4px;top:53.58px">3</span>
<i class="g" style="left:917.3px;top:53.58px"></i>
<span class="t dot" style="left:915.2px;top:53.58px"> ·       · ·</span>
<span class="t g1" style="left:925.6px;top:53.58px">version</span>
<span class="t b5" style="left:967.2px;top:53.58px">=</span>
<span class="t grn" style="left:977.6px;top:53.58px">"*"</span>
<span class="t b5" style="left:993.2px;top:53.58px">,</span>
<span class="t ln cur" style="left:894.4px;top:65.17px">4</span>
<i class="g" style="left:917.3px;top:65.17px"></i>
<span class="t dot" style="left:915.2px;top:65.17px"> ·    · ·</span>
<span class="t g1" style="left:925.6px;top:65.17px">opts</span>
<span class="t b5" style="left:951.6px;top:65.17px">=</span>
<span class="t mag" style="left:962.0px;top:65.17px">{</span>
<span class="t mag" style="left:967.2px;top:65.17px">}</span>
<span class="t b5" style="left:972.4px;top:65.17px">,</span>
<span class="t ln" style="left:894.4px;top:76.76px">5</span>
<i class="g" style="left:917.3px;top:76.76px"></i>
<span class="t dot" style="left:915.2px;top:76.76px"> ·    · ·</span>
<span class="t g1" style="left:925.6px;top:76.76px">keys</span>
<span class="t b5" style="left:951.6px;top:76.76px">=</span>
<span class="t mag" style="left:962.0px;top:76.76px">{</span>
<span class="t ln" style="left:894.4px;top:88.35px">6</span>
<i class="g" style="left:917.3px;top:88.35px"></i>
<i class="g" style="left:927.7px;top:88.35px"></i>
<span class="t dot" style="left:915.2px;top:88.35px"> · ·</span>
<span class="t mag" style="left:936.0px;top:88.35px">{</span>
<span class="t ln" style="left:894.4px;top:99.94px">7</span>
<i class="g" style="left:917.3px;top:99.94px"></i>
<i class="g" style="left:927.7px;top:99.94px"></i>
<i class="g" style="left:938.1px;top:99.94px"></i>
<span class="t dot" style="left:915.2px;top:99.94px"> · · ·</span>
<span class="t grn" style="left:946.4px;top:99.94px">"s"</span>
<span class="t b5" style="left:962.0px;top:99.94px">,</span>
<span class="t ln" style="left:894.4px;top:111.54px">8</span>
<i class="g" style="left:917.3px;top:111.54px"></i>
<i class="g" style="left:927.7px;top:111.54px"></i>
<i class="g" style="left:938.1px;top:111.54px"></i>
<span class="t dot" style="left:915.2px;top:111.54px"> · · ·  ·          ·                           ·</span>
<span class="t com" style="left:946.4px;top:111.54px">--</span>
<span class="t com" style="left:962.0px;top:111.54px">function()</span>
<span class="t com" style="left:1019.2px;top:111.54px">require("hop").hint_words()</span>
<span class="t com" style="left:1164.8px;top:111.54px">end,</span>
<span class="t ln" style="left:894.4px;top:123.13px">9</span>
<i class="g" style="left:917.3px;top:123.13px"></i>
<i class="g" style="left:927.7px;top:123.13px"></i>
<i class="g" style="left:938.1px;top:123.13px"></i>
<span class="t dot" style="left:915.2px;top:123.13px"> · · ·    · · ·    ·   ·</span>
<span class="t g1" style="left:946.4px;top:123.13px">mode</span>
<span class="t b5" style="left:972.4px;top:123.13px">=</span>
<span class="t mag" style="left:982.8px;top:123.13px">{</span>
<span class="t grn" style="left:993.2px;top:123.13px">"n"</span>
<span class="t b5" style="left:1008.8px;top:123.13px">,</span>
<span class="t grn" style="left:1019.2px;top:123.13px">"v"</span>
<span class="t mag" style="left:1040.0px;top:123.13px">}</span>
<span class="t b5" style="left:1045.2px;top:123.13px">,</span>
<span class="t ln" style="left:889.2px;top:134.72px">10</span>
<i class="g" style="left:917.3px;top:134.72px"></i>
<i class="g" style="left:927.7px;top:134.72px"></i>
<i class="g" style="left:938.1px;top:134.72px"></i>
<span class="t dot" style="left:915.2px;top:134.72px"> · · ·    · ·    ·    ·</span>
<span class="t g1" style="left:946.4px;top:134.72px">desc</span>
<span class="t b5" style="left:972.4px;top:134.72px">=</span>
<span class="t grn" style="left:982.8px;top:134.72px">"Hop</span>
<span class="t grn" style="left:1008.8px;top:134.72px">hint</span>
<span class="t grn" style="left:1034.8px;top:134.72px">words"</span>
<span class="t b5" style="left:1066.0px;top:134.72px">,</span>
<span class="t ln" style="left:889.2px;top:146.31px">11</span>
<i class="g" style="left:917.3px;top:146.31px"></i>
<i class="g" style="left:927.7px;top:146.31px"></i>
<span class="t dot" style="left:915.2px;top:146.31px"> · ·</span>
<span class="t mag" style="left:936.0px;top:146.31px">}</span>
<span class="t b5" style="left:941.2px;top:146.31px">,</span>
<span class="t ln" style="left:889.2px;top:157.9px">12</span>
<i class="g" style="left:917.3px;top:157.9px"></i>
<i class="g" style="left:927.7px;top:157.9px"></i>
<span class="t dot" style="left:915.2px;top:157.9px"> · ·</span>
<span class="t mag" style="left:936.0px;top:157.9px">{</span>
<span class="t ln" style="left:889.2px;top:169.5px">13</span>
<i class="g" style="left:917.3px;top:169.5px"></i>
<i class="g" style="left:927.7px;top:169.5px"></i>
<i class="g" style="left:938.1px;top:169.5px"></i>
<span class="t dot" style="left:915.2px;top:169.5px"> · · ·</span>
<span class="t grn" style="left:946.4px;top:169.5px">"&lt;S-s&gt;"</span>
<span class="t b5" style="left:982.8px;top:169.5px">,</span>
<span class="t ln" style="left:889.2px;top:181.09px">14</span>
<i class="g" style="left:917.3px;top:181.09px"></i>
<i class="g" style="left:927.7px;top:181.09px"></i>
<i class="g" style="left:938.1px;top:181.09px"></i>
<span class="t dot" style="left:915.2px;top:181.09px"> · · ·  ·          ·                           ·</span>
<span class="t com" style="left:946.4px;top:181.09px">--</span>
<span class="t com" style="left:962.0px;top:181.09px">function()</span>
<span class="t com" style="left:1019.2px;top:181.09px">require("hop").hint_lines()</span>
<span class="t com" style="left:1164.8px;top:181.09px">end,</span>
<span class="t ln" style="left:889.2px;top:192.68px">15</span>
<i class="g" style="left:917.3px;top:192.68px"></i>
<i class="g" style="left:927.7px;top:192.68px"></i>
<i class="g" style="left:938.1px;top:192.68px"></i>
<span class="t dot" style="left:915.2px;top:192.68px"> · · ·    · · ·   ·</span>
<span class="t g1" style="left:946.4px;top:192.68px">mode</span>
<span class="t b5" style="left:972.4px;top:192.68px">=</span>
<span class="t mag" style="left:982.8px;top:192.68px">{</span>
<span class="t grn" style="left:993.2px;top:192.68px">"n"</span>
<span class="t mag" style="left:1014.0px;top:192.68px">}</span>
<span class="t b5" style="left:1019.2px;top:192.68px">,</span>
<span class="t ln" style="left:889.2px;top:204.27px">16</span>
<i class="g" style="left:917.3px;top:204.27px"></i>
<i class="g" style="left:927.7px;top:204.27px"></i>
<i class="g" style="left:938.1px;top:204.27px"></i>
<span class="t dot" style="left:915.2px;top:204.27px"> · · ·    · ·    ·    ·</span>
<span class="t g1" style="left:946.4px;top:204.27px">desc</span>
<span class="t b5" style="left:972.4px;top:204.27px">=</span>
<span class="t grn" style="left:982.8px;top:204.27px">"Hop</span>
<span class="t grn" style="left:1008.8px;top:204.27px">hint</span>
<span class="t grn" style="left:1034.8px;top:204.27px">lines"</span>
<span class="t b5" style="left:1066.0px;top:204.27px">,</span>
<span class="t ln" style="left:889.2px;top:215.86px">17</span>
<i class="g" style="left:917.3px;top:215.86px"></i>
<i class="g" style="left:927.7px;top:215.86px"></i>
<span class="t dot" style="left:915.2px;top:215.86px"> · ·</span>
<span class="t mag" style="left:936.0px;top:215.86px">}</span>
<span class="t b5" style="left:941.2px;top:215.86px">,</span>
<span class="t ln" style="left:889.2px;top:227.46px">18</span>
<i class="g" style="left:917.3px;top:227.46px"></i>
<i class="g" style="left:927.7px;top:227.46px"></i>
<span class="t dot" style="left:915.2px;top:227.46px"> · ·</span>
<span class="t mag" style="left:936.0px;top:227.46px">{</span>
<span class="t ln" style="left:889.2px;top:239.05px">19</span>
<i class="g" style="left:917.3px;top:239.05px"></i>
<i class="g" style="left:927.7px;top:239.05px"></i>
<i class="g" style="left:938.1px;top:239.05px"></i>
<span class="t dot" style="left:915.2px;top:239.05px"> · · ·</span>
<span class="t grn" style="left:946.4px;top:239.05px">"s"</span>
<span class="t b5" style="left:962.0px;top:239.05px">,</span>
<span class="t ln" style="left:889.2px;top:250.64px">20</span>
<i class="g" style="left:917.3px;top:250.64px"></i>
<i class="g" style="left:927.7px;top:250.64px"></i>
<i class="g" style="left:938.1px;top:250.64px"></i>
<span class="t dot" style="left:915.2px;top:250.64px"> · · ·  ·          ·                         · ·             · ·    · ·</span>
<span class="t com" style="left:946.4px;top:250.64px">--</span>
<span class="t com" style="left:962.0px;top:250.64px">function()</span>
<span class="t com" style="left:1019.2px;top:250.64px">require("hop").hint_words</span>
<span class="t com" style="left:1154.4px;top:250.64px">{</span>
<span class="t com" style="left:1164.8px;top:250.64px">extend_visual</span>
<span class="t com" style="left:1237.6px;top:250.64px">=</span>
<span class="t com" style="left:1248.0px;top:250.64px">true</span>
<span class="t com" style="left:1274.0px;top:250.64px">}</span>
<span class="t com" style="left:1284.4px;top:250.64px">end,</span>
<span class="t ln" style="left:889.2px;top:262.23px">21</span>
<i class="g" style="left:917.3px;top:262.23px"></i>
<i class="g" style="left:927.7px;top:262.23px"></i>
<i class="g" style="left:938.1px;top:262.23px"></i>
<span class="t dot" style="left:915.2px;top:262.23px"> · · ·    · · ·   ·</span>
<span class="t g1" style="left:946.4px;top:262.23px">mode</span>
<span class="t b5" style="left:972.4px;top:262.23px">=</span>
<span class="t mag" style="left:982.8px;top:262.23px">{</span>
<span class="t grn" style="left:993.2px;top:262.23px">"v"</span>
<span class="t mag" style="left:1014.0px;top:262.23px">}</span>
<span class="t b5" style="left:1019.2px;top:262.23px">,</span>
<span class="t ln" style="left:889.2px;top:273.82px">22</span>
<i class="g" style="left:917.3px;top:273.82px"></i>
<i class="g" style="left:927.7px;top:273.82px"></i>
<i class="g" style="left:938.1px;top:273.82px"></i>
<span class="t dot" style="left:915.2px;top:273.82px"> · · ·    · ·    ·    ·</span>
<span class="t g1" style="left:946.4px;top:273.82px">desc</span>
<span class="t b5" style="left:972.4px;top:273.82px">=</span>
<span class="t grn" style="left:982.8px;top:273.82px">"Hop</span>
<span class="t grn" style="left:1008.8px;top:273.82px">hint</span>
<span class="t grn" style="left:1034.8px;top:273.82px">words"</span>
<span class="t b5" style="left:1066.0px;top:273.82px">,</span>
<span class="t ln" style="left:889.2px;top:285.42px">23</span>
<i class="g" style="left:917.3px;top:285.42px"></i>
<i class="g" style="left:927.7px;top:285.42px"></i>
<span class="t dot" style="left:915.2px;top:285.42px"> · ·</span>
<span class="t mag" style="left:936.0px;top:285.42px">}</span>
<span class="t b5" style="left:941.2px;top:285.42px">,</span>
<span class="t ln" style="left:889.2px;top:297.01px">24</span>
<i class="g" style="left:917.3px;top:297.01px"></i>
<i class="g" style="left:927.7px;top:297.01px"></i>
<span class="t dot" style="left:915.2px;top:297.01px"> · ·</span>
<span class="t mag" style="left:936.0px;top:297.01px">{</span>
<span class="t ln" style="left:889.2px;top:308.6px">25</span>
<i class="g" style="left:917.3px;top:308.6px"></i>
<i class="g" style="left:927.7px;top:308.6px"></i>
<i class="g" style="left:938.1px;top:308.6px"></i>
<span class="t dot" style="left:915.2px;top:308.6px"> · · ·</span>
<span class="t grn" style="left:946.4px;top:308.6px">"&lt;S-s&gt;"</span>
<span class="t b5" style="left:982.8px;top:308.6px">,</span>
<span class="t ln" style="left:889.2px;top:320.19px">26</span>
<i class="g" style="left:917.3px;top:320.19px"></i>
<i class="g" style="left:927.7px;top:320.19px"></i>
<i class="g" style="left:938.1px;top:320.19px"></i>
<span class="t dot" style="left:915.2px;top:320.19px"> · · ·  ·          ·                         · ·             · ·    · ·</span>
<span class="t com" style="left:946.4px;top:320.19px">--</span>
<span class="t com" style="left:962.0px;top:320.19px">function()</span>
<span class="t com" style="left:1019.2px;top:320.19px">require("hop").hint_lines</span>
<span class="t com" style="left:1154.4px;top:320.19px">{</span>
<span class="t com" style="left:1164.8px;top:320.19px">extend_visual</span>
<span class="t com" style="left:1237.6px;top:320.19px">=</span>
<span class="t com" style="left:1248.0px;top:320.19px">true</span>
<span class="t com" style="left:1274.0px;top:320.19px">}</span>
<span class="t com" style="left:1284.4px;top:320.19px">end,</span>
<span class="t ln" style="left:889.2px;top:331.78px">27</span>
<i class="g" style="left:917.3px;top:331.78px"></i>
<i class="g" style="left:927.7px;top:331.78px"></i>
<i class="g" style="left:938.1px;top:331.78px"></i>
<span class="t dot" style="left:915.2px;top:331.78px"> · · ·    · · ·   ·</span>
<span class="t g1" style="left:946.4px;top:331.78px">mode</span>
<span class="t b5" style="left:972.4px;top:331.78px">=</span>
<span class="t mag" style="left:982.8px;top:331.78px">{</span>
<span class="t grn" style="left:993.2px;top:331.78px">"v"</span>
<span class="t mag" style="left:1014.0px;top:331.78px">}</span>
<span class="t b5" style="left:1019.2px;top:331.78px">,</span>
<span class="t ln" style="left:889.2px;top:343.38px">28</span>
<i class="g" style="left:917.3px;top:343.38px"></i>
<i class="g" style="left:927.7px;top:343.38px"></i>
<i class="g" style="left:938.1px;top:343.38px"></i>
<span class="t dot" style="left:915.2px;top:343.38px"> · · ·    · ·    ·    ·</span>
<span class="t g1" style="left:946.4px;top:343.38px">desc</span>
<span class="t b5" style="left:972.4px;top:343.38px">=</span>
<span class="t grn" style="left:982.8px;top:343.38px">"Hop</span>
<span class="t grn" style="left:1008.8px;top:343.38px">hint</span>
<span class="t grn" style="left:1034.8px;top:343.38px">lines"</span>
<span class="t b5" style="left:1066.0px;top:343.38px">,</span>
<span class="t ln" style="left:889.2px;top:354.97px">29</span>
<i class="g" style="left:917.3px;top:354.97px"></i>
<i class="g" style="left:927.7px;top:354.97px"></i>
<span class="t dot" style="left:915.2px;top:354.97px"> · ·</span>
<span class="t mag" style="left:936.0px;top:354.97px">}</span>
<span class="t b5" style="left:941.2px;top:354.97px">,</span>
<span class="t ln" style="left:889.2px;top:366.56px">30</span>
<i class="g" style="left:917.3px;top:366.56px"></i>
<span class="t dot" style="left:915.2px;top:366.56px"> ·</span>
<span class="t mag" style="left:925.6px;top:366.56px">}</span>
<span class="t b5" style="left:930.8px;top:366.56px">,</span>
<span class="t ln" style="left:889.2px;top:378.15px">31</span>
<span class="t mag" style="left:915.2px;top:378.15px">}</span>
<svg id="arr" width="1536" height="835" viewBox="0 0 1536 835"><g fill="#ed1c24">
<polygon points="106.87,84.74 117.55,85.13 115.98,87.92 143.19,103.41 159.32,113.06 176.05,123.06 175.55,123.94 158.32,114.84 141.69,106.08 114.32,90.88 112.75,93.67"/>
<polygon points="87.97,157.98 98.64,159.4 96.83,162.04 135.93,188.95 159.17,205.42 183.28,222.49 182.72,223.31 158.05,207.06 134.26,191.4 94.97,164.76 93.16,167.4"/>
<polygon points="344.13,255.6 351.54,247.83 352.39,249.91 520.68,181.53 621.85,140.98 726.81,99.04 727.19,99.96 622.82,143.37 522.14,185.11 354.01,253.89 354.86,255.97"/>
<polygon points="1157.89,80.0 1168.64,78.41 1167.89,80.85 1278.77,115.39 1345.15,136.6 1413.95,158.72 1413.65,159.68 1344.38,139.07 1277.63,119.08 1166.61,84.95 1165.86,87.39"/>
</g></svg>
</div></body></html>
